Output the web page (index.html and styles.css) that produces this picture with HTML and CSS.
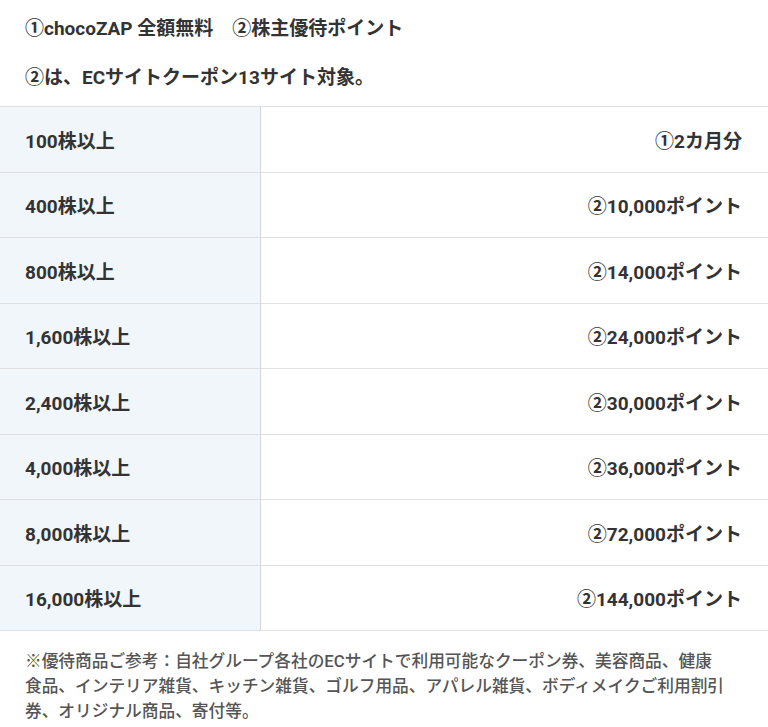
FILE: index.html
```html
<!DOCTYPE html>
<html lang="ja">
<head>
<meta charset="utf-8">
<link rel="stylesheet" href="styles.css">
</head>
<body>
<div class="intro">
  <p class="intro-line">①chocoZAP 全額無料　②株主優待ポイント</p>
  <p class="intro-line">②は、ECサイトクーポン13サイト対象。</p>
</div>
<table class="benefits">
  <tbody>
    <tr><th>100株以上</th><td>①2カ月分</td></tr>
    <tr><th>400株以上</th><td>②10,000ポイント</td></tr>
    <tr><th>800株以上</th><td>②14,000ポイント</td></tr>
    <tr><th>1,600株以上</th><td>②24,000ポイント</td></tr>
    <tr><th>2,400株以上</th><td>②30,000ポイント</td></tr>
    <tr><th>4,000株以上</th><td>②36,000ポイント</td></tr>
    <tr><th>8,000株以上</th><td>②72,000ポイント</td></tr>
    <tr><th>16,000株以上</th><td>②144,000ポイント</td></tr>
  </tbody>
</table>
<p class="note">※優待商品ご参考：自社グループ各社のECサイトで利用可能なクーポン券、美容商品、健康<br>食品、インテリア雑貨、キッチン雑貨、ゴルフ用品、アパレル雑貨、ボディメイクご利用割引<br>券、オリジナル商品、寄付等。</p>
</body>
</html>
```

FILE: styles.css
```css
html, body {
  margin: 0;
  padding: 0;
  background: #fff;
}
body {
  font-family: Roboto, "Noto Sans CJK JP", sans-serif;
  color: #333;
  font-weight: 700;
}
.intro {
  padding: 14px 25px 0;
}
.intro-line {
  margin: 0;
  font-size: 19px;
  line-height: 30px;
}
.intro-line + .intro-line {
  margin-top: 19px;
}
.benefits {
  width: 100%;
  border-collapse: collapse;
  border-top: 1px solid #e0e0e0;
  margin-top: 13px;
}
.benefits tr {
  height: 65.5px;
  border-bottom: 1px solid #e0e0e0;
}
.benefits th {
  width: 235px;
  padding: 0 0 0 25px;
  text-align: left;
  background: #f1f6fa;
  border-right: 1px solid #d6d6d6;
  font-size: 19px;
  font-weight: 700;
}
.benefits td {
  padding: 0 26px 0 0;
  text-align: right;
  font-size: 19px;
}
.note {
  margin: 18px 0 0;
  padding: 0 20px 0 25px;
  font-size: 16.7px;
  line-height: 25px;
  color: #555;
  font-weight: 500;
  white-space: nowrap;
}
```
